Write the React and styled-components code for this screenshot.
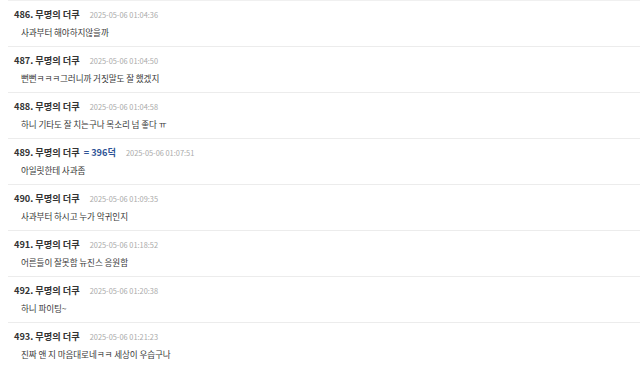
import React from "react";
import styled, { createGlobalStyle } from "styled-components";

const GlobalStyle = createGlobalStyle`
  body {
    margin: 0;
    background: #fff;
    overflow: hidden;
    font-family: "Noto Sans CJK KR", "Noto Sans", sans-serif;
  }
`;

const comments = [
  { no: 486, date: "2025-05-06 01:04:36", text: "사과부터 해야하지않을까" },
  { no: 487, date: "2025-05-06 01:04:50", text: "뻔뻔ㅋㅋㅋ그러니까 거짓말도 잘 했겠지" },
  { no: 488, date: "2025-05-06 01:04:58", text: "하니 기타도 잘 치는구나 목소리 넘 좋다 ㅠ" },
  { no: 489, date: "2025-05-06 01:07:51", text: "아일릿한테 사과좀", badge: "= 396덕" },
  { no: 490, date: "2025-05-06 01:09:35", text: "사과부터 하시고 누가 악귀인지" },
  { no: 491, date: "2025-05-06 01:18:52", text: "어른들이 잘못함 뉴진스 응원함" },
  { no: 492, date: "2025-05-06 01:20:38", text: "하니 파이팅~" },
  { no: 493, date: "2025-05-06 01:21:23", text: "진짜 앤 지 마음대로네ㅋㅋ 세상이 우습구나" },
];

const List = styled.ul`
  list-style: none;
  margin: 0 0 0 8px;
  padding: 0;
  border-top: 1px solid #f0f0f0;
`;

const Item = styled.li`
  box-sizing: border-box;
  height: 46px;
  padding: 6px 0 0 6px;
  border-bottom: 1px solid #ececec;
`;

const Head = styled.div`
  display: flex;
  align-items: baseline;
  height: 14px;
  line-height: 14px;
`;

const Name = styled.span`
  font-size: 9.2px;
  font-weight: 700;
  color: #333;
`;

const Badge = styled.span`
  font-size: 9.2px;
  font-weight: 700;
  color: #2f5496;
  margin-left: 4px;
`;

const Date = styled.span`
  font-size: 7.4px;
  color: #aaa;
  margin-left: 10px;
`;

const Body = styled.div`
  margin: 4px 0 0 7px;
  font-size: 8.6px;
  line-height: 14px;
  letter-spacing: -0.1px;
  color: #3a3a3a;
`;

export default function App() {
  return (
    <>
      <GlobalStyle />
      <List>
        {comments.map((c) => (
          <Item key={c.no}>
            <Head>
              <Name>{c.no}. 무명의 더쿠</Name>
              {c.badge && <Badge>{c.badge}</Badge>}
              <Date>{c.date}</Date>
            </Head>
            <Body>{c.text}</Body>
          </Item>
        ))}
      </List>
    </>
  );
}
